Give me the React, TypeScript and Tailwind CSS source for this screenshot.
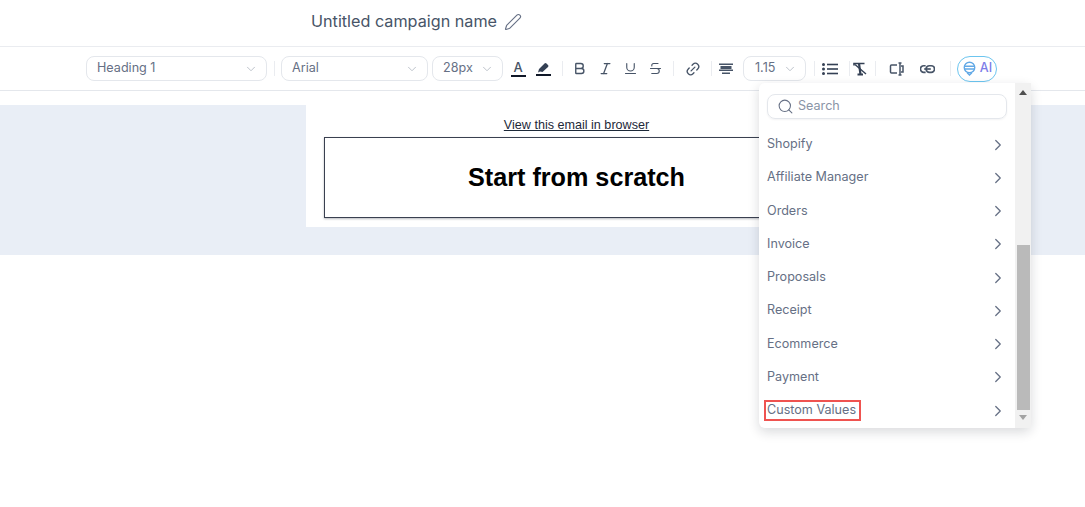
import React from "react";
import { ChevronDown, ChevronRight, Search, Pen, Bold, Italic, Underline, Strikethrough, Link2 } from "lucide-react";

const items = ["Shopify", "Affiliate Manager", "Orders", "Invoice", "Proposals", "Receipt", "Ecommerce", "Payment"];

const Select = ({ label, className }: { label: string; className: string }) => (
  <div className={`flex h-[25px] shrink-0 items-center justify-between rounded-[8px] border border-[#e4e7ec] pl-[10px] pr-[8px] text-[12.6px] text-[#667085] ${className}`}>
    <span>{label}</span>
    <ChevronDown className="h-[14px] w-[14px] text-[#b4bac4]" strokeWidth={1.5} />
  </div>
);

const Sep = ({ className }: { className: string }) => <div className={`h-[15px] w-px shrink-0 bg-[#eaecf0] ${className}`} />;

const App = () => {
  return (
    <div className="relative h-[507px] w-[1085px] overflow-hidden bg-white font-['Inter',sans-serif]">
      <div className="flex h-[47px] items-center border-b border-[#eaecf0] pb-[3px] pl-[311px]">
        <span className="text-[16.2px] text-[#475467]">Untitled campaign name</span>
        <Pen className="ml-[7px] h-[18px] w-[18px] text-[#667085]" strokeWidth={1.5} />
      </div>

      <div className="flex h-[44px] items-center border-b border-[#e4e7ec] pl-[86px]">
        <Select label="Heading 1" className="w-[181px]" />
        <Sep className="ml-[7px]" />
        <Select label="Arial" className="ml-[6px] w-[147px]" />
        <Select label="28px" className="ml-[4px] w-[71px]" />
        <div className="ml-[5px] flex w-[20px] flex-col items-center">
          <span className="text-[13px] font-medium leading-[13px] text-[#475467]">A</span>
          <div className="mt-[1px] h-[2px] w-[15px] bg-[#101828]" />
        </div>
        <div className="ml-[5px] flex w-[20px] flex-col items-center">
          <svg viewBox="0 0 14 11" className="h-[11px] w-[14px]">
            <path d="M2 10.5 L3 7 L8.5 1.5 Q9.5 0.5 10.5 1.5 L12 3 Q13 4 12 5 L6.5 10 L4 9.5 Z" fill="#344054" />
          </svg>
          <div className="mt-[1px] h-[2px] w-[15px] bg-[#101828]" />
        </div>
        <Sep className="ml-[9px]" />
        <Bold className="ml-[9px] h-[15px] w-[15px] shrink-0 text-[#475467]" strokeWidth={2.2} />
        <Italic className="ml-[11px] h-[15px] w-[15px] shrink-0 text-[#475467]" strokeWidth={2} />
        <Underline className="ml-[10px] h-[15px] w-[15px] shrink-0 text-[#475467]" strokeWidth={1.8} />
        <Strikethrough className="ml-[10px] h-[15px] w-[15px] shrink-0 text-[#475467]" strokeWidth={1.8} />
        <Sep className="ml-[10px]" />
        <Link2 className="ml-[11px] h-[16px] w-[16px] shrink-0 -rotate-45 text-[#475467]" strokeWidth={2} />
        <Sep className="ml-[10px]" />
        <svg viewBox="0 0 14 12" className="ml-[7px] h-[12px] w-[14px] shrink-0" fill="#475467">
          <rect x="0" y="0.5" width="14" height="1.5" />
          <rect x="1.5" y="3" width="11" height="3" />
          <rect x="0" y="6.5" width="14" height="1.5" />
          <rect x="3" y="9.5" width="8" height="1.5" />
        </svg>
        <Select label="1.15" className="ml-[10px] w-[63px] pl-[11px]" />
        <Sep className="ml-[8px]" />
        <svg viewBox="0 0 16 12" className="ml-[7px] h-[12px] w-[16px] shrink-0" fill="#344054">
          <circle cx="1.5" cy="1.5" r="1.5" />
          <circle cx="1.5" cy="6" r="1.5" />
          <circle cx="1.5" cy="10.5" r="1.5" />
          <rect x="5" y="0.7" width="11" height="1.6" />
          <rect x="5" y="5.2" width="11" height="1.6" />
          <rect x="5" y="9.7" width="11" height="1.6" />
        </svg>
        <Sep className="ml-[11px]" />
        <svg viewBox="0 0 14 14" className="ml-[3px] h-[14px] w-[14px] shrink-0" fill="none" stroke="#344054">
          <path d="M1 3.5V1.5H11.5" strokeWidth="1.6" />
          <path d="M6 1.5L7.5 12.5M4.5 12.5H10" strokeWidth="2.2" />
          <path d="M2 2.5L13 12" strokeWidth="1.4" />
        </svg>
        <Sep className="ml-[8px]" />
        <svg viewBox="0 0 16 14" className="ml-[13px] h-[14px] w-[16px] shrink-0" fill="none" stroke="#475467" strokeWidth="1.5">
          <path d="M8 3H2.5a1 1 0 0 0-1 1v6a1 1 0 0 0 1 1H8" />
          <path d="M11 1v12M9.5 1h3M9.5 13h3" />
          <path d="M12 4h2v6h-2" />
        </svg>
        <svg viewBox="0 0 16 10" className="ml-[15px] h-[10px] w-[15px] shrink-0" fill="none" stroke="#475467" strokeWidth="1.8">
          <path d="M6 1.5H4a3.5 3.5 0 0 0 0 7h2" />
          <path d="M10 1.5h2a3.5 3.5 0 0 1 0 7h-2a3.5 3.5 0 0 1 0-7z" />
          <path d="M4.5 5h7" />
        </svg>
        <Sep className="ml-[15px]" />
        <div className="ml-[6px] flex h-[26px] w-[40px] shrink-0 items-center justify-center gap-[3px] rounded-[13px] border-[1.5px] border-[#6cc5ef]">
          <svg viewBox="0 0 16 16" className="h-[15px] w-[15px]" fill="none" stroke="#62a9e6" strokeWidth="1.5">
            <circle cx="8" cy="7" r="5.6" />
            <path d="M2.4 5.5h11.2M2.4 8.5h11.2" strokeWidth="1.6" />
            <path d="M5.5 12.5L8 15l2.5-2.5" />
          </svg>
          <span className="text-[12.5px] font-medium leading-none text-[#7c7ce8]">AI</span>
        </div>
      </div>

      <div className="pt-[14px]">
        <div className="h-[150px] bg-[#e9eef6] pl-[306px]">
          <div className="h-[122px] w-[541px] bg-white px-[18px] pt-[12px] font-['Liberation_Sans',sans-serif]">
            <p className="text-center text-[12.6px] leading-[16px] text-[#1d2939] underline">View this email in browser</p>
            <div className="mt-[4px] flex h-[81px] items-center justify-center border-[1.5px] border-[#3a4050] shadow-[0_1px_2px_rgba(16,24,40,0.3)]">
              <h1 className="text-[25.2px] font-bold leading-none text-black">Start from scratch</h1>
            </div>
          </div>
        </div>
      </div>

      {/* variable picker, sits on top of the editor */}
      <div className="absolute left-[759px] top-[83px] flex h-[345px] w-[272px] rounded-[6px] bg-white shadow-[0_4px_12px_rgba(16,24,40,0.16)]">
        <div className="w-[256px] px-[8px] pt-[11px]">
          <div className="flex h-[25px] items-center rounded-[8px] border border-[#e4e7ec] pl-[9px] shadow-[0_1px_2px_rgba(16,24,40,0.05)]">
            <Search className="h-[17px] w-[17px] text-[#667085]" strokeWidth={1.5} />
            <span className="ml-[4px] text-[12.6px] text-[#8a94a6]">Search</span>
          </div>
          <div className="mt-[9px] flex flex-col">
            {items.map((item) => (
              <div key={item} className="flex h-[33.25px] items-center justify-between text-[12.6px] text-[#667085]">
                <span>{item}</span>
                <ChevronRight className="h-[18px] w-[18px] text-[#667085]" strokeWidth={1.7} />
              </div>
            ))}
            <div className="flex h-[33.25px] items-center justify-between text-[12.6px] text-[#667085]">
              <span className="relative">
                Custom Values
                <span className="absolute -inset-y-[1px] -left-[3px] -right-[5px] border-2 border-[#ef5350]" />
              </span>
              <ChevronRight className="h-[18px] w-[18px] text-[#667085]" strokeWidth={1.7} />
            </div>
          </div>
        </div>
        <div className="flex w-[16px] flex-col items-center bg-[#f1f1f1]">
          <div className="mt-[7px] h-0 w-0 border-x-[4px] border-b-[5px] border-x-transparent border-b-[#505050]" />
          <div className="mt-[150px] h-[165px] w-[13px] bg-[#bababa]" />
          <div className="mt-[5px] h-0 w-0 border-x-[4px] border-t-[5px] border-x-transparent border-t-[#a3a3a3]" />
        </div>
      </div>
    </div>
  );
};

export default App;
